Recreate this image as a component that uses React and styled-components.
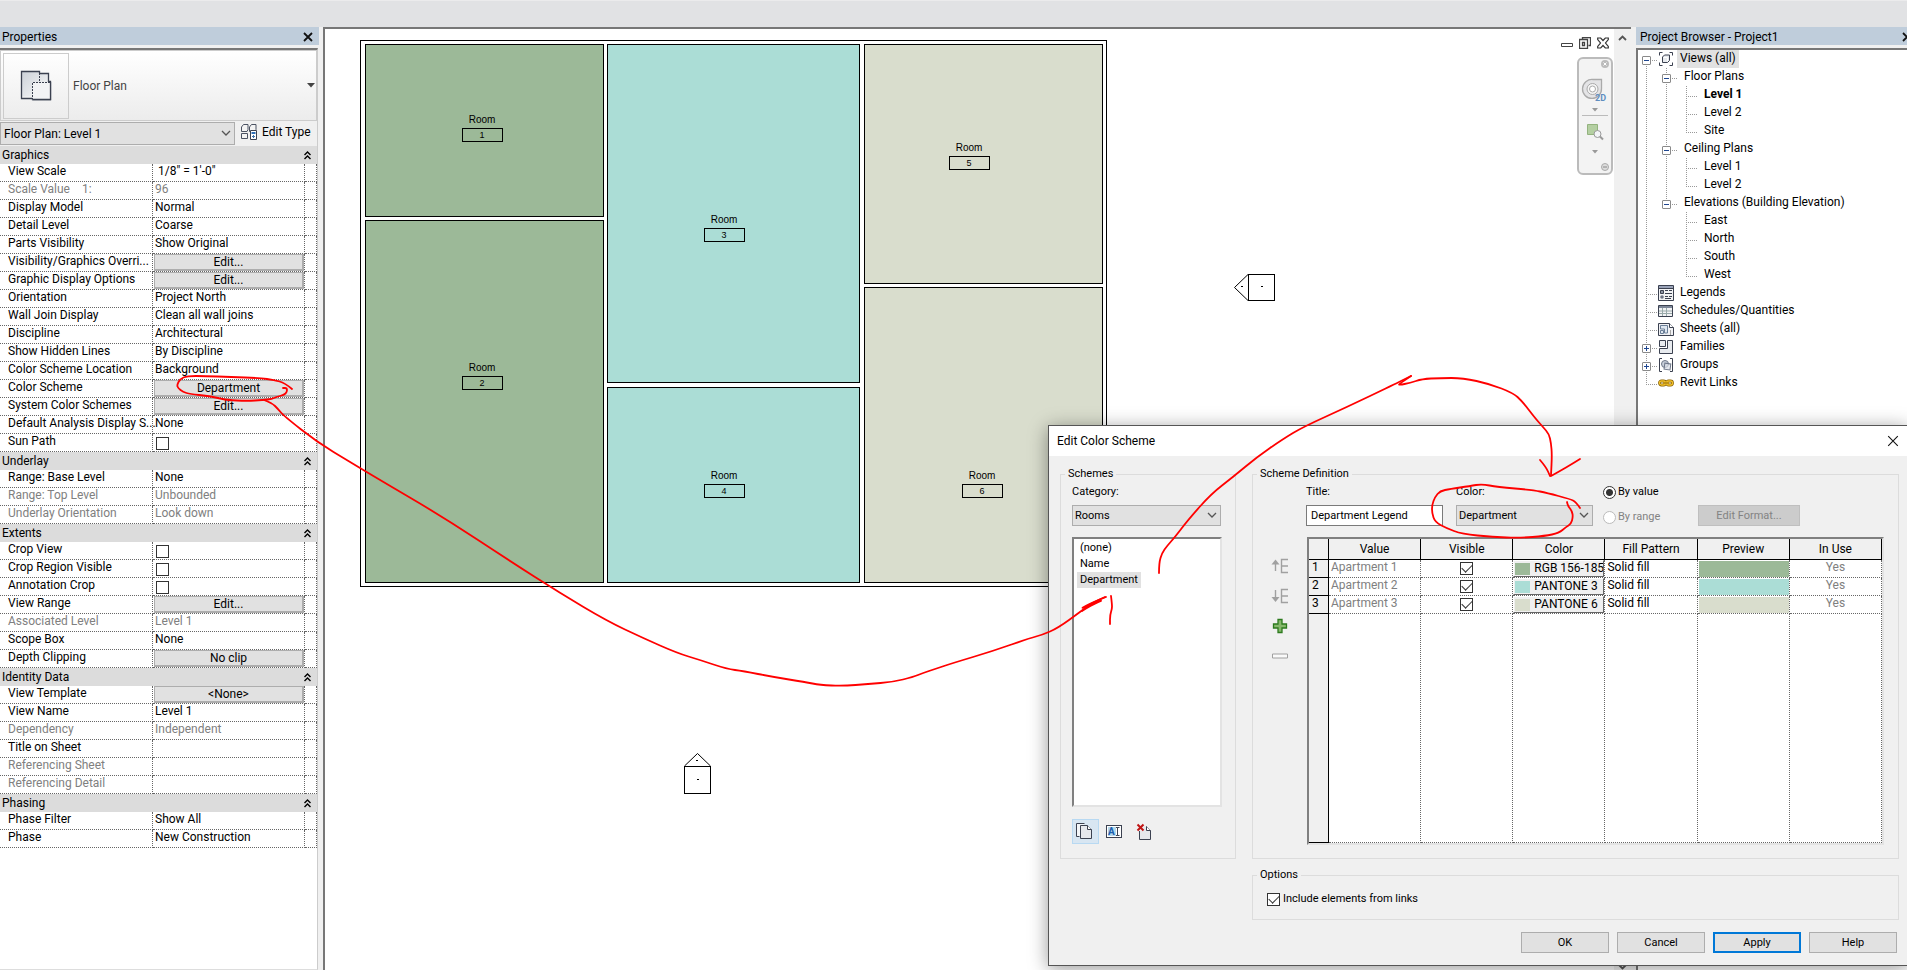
import React from "react";
import styled, { createGlobalStyle, css } from "styled-components";

const GREEN = "#9cb998";
const TEAL = "#abddd6";
const SAND = "#d9ddcd";

const GlobalStyle = createGlobalStyle`
  * {
    box-sizing: border-box;
  }
  body {
    margin: 0;
    overflow: hidden;
    font-family: Roboto, "Liberation Sans", sans-serif;
    font-size: 12px;
    line-height: 16px;
    color: #000;
  }
  button,
  input,
  select {
    font: inherit;
    color: inherit;
    margin: 0;
  }
`;

/* ---------- window frame ---------- */

const Page = styled.div`
  position: relative;
  display: flex;
  flex-direction: column;
  height: 100vh;
  overflow: hidden;
  background: #f0f0f0;
`;

const Ribbon = styled.header`
  flex: 0 0 27px;
  background: #e1e2e4;
  border-top: 1px solid #ebebec;
`;

const Workspace = styled.div`
  flex: 1;
  display: flex;
  min-height: 0;
`;

const DockTitle = styled.h2`
  display: flex;
  align-items: center;
  justify-content: space-between;
  height: 18px;
  margin: 0 0 3px;
  padding: ${(p) => p.$pad};
  background: #bfcddb;
  font-size: 12px;
  font-weight: 400;
  line-height: 18px;
  white-space: nowrap;
`;

const IconButton = styled.button`
  display: inline-flex;
  align-items: center;
  justify-content: center;
  padding: 0;
  border: 0;
  background: none;
`;

/* ---------- properties dock ---------- */

const PropertiesDock = styled.aside`
  flex: 0 0 323px;
  display: flex;
  flex-direction: column;
  padding-right: 4px;
`;

const PropertiesBody = styled.div`
  flex: 1;
  margin-right: 1px;
  border-top: 2px solid #777;
  border-right: 1px solid #ccc;
  border-bottom: 1px solid #ddd;
  background: #fff;
`;

const TypeSelector = styled.div`
  display: flex;
  align-items: center;
  height: 71px;
  padding: 0 1px 0 2px;
  border: 1px solid #ccc;
  background: linear-gradient(#fff, #ececec);
  color: #444;
`;

const TypePreview = styled.div`
  display: flex;
  align-items: center;
  justify-content: center;
  width: 66px;
  height: 66px;
  margin-right: 4px;
  border: 1px solid #ccc;
`;

const TypeName = styled.span`
  flex: 1;
`;

const FilterBar = styled.div`
  display: flex;
  align-items: center;
  gap: 6px;
  height: 25px;
  background: #f0f0f0;
`;

const EditType = styled.button`
  display: flex;
  align-items: center;
  gap: 5px;
  padding: 0 0 3px;
  border: 0;
  background: none;
  white-space: nowrap;
`;

const PropertyTable = styled.table`
  width: 100%;
  table-layout: fixed;
  border-collapse: separate;
  border-spacing: 0;
  white-space: nowrap;

  th,
  td {
    height: 18px;
    padding: 0;
    font-weight: 400;
    text-align: left;
    line-height: 15px;
    vertical-align: top;
  }
`;

const GroupHeading = styled.div`
  display: flex;
  align-items: center;
  justify-content: space-between;
  height: 18px;
  padding: 0 5px 0 2px;
  background: #dcdcdc;
`;

const PropertyRow = styled.tr`
  color: ${(p) => (p.$muted ? "#808080" : "#000")};

  th,
  td {
    border-right: 1px dotted #666;
    border-bottom: 1px dotted #666;
  }
  th {
    padding-left: 8px;
    white-space: pre;
  }
  td {
    padding-left: ${(p) => (p.$control ? 1 : 2)}px;
    white-space: pre;
  }
`;

const PropertyButton = styled.button`
  display: block;
  width: 100%;
  height: 17px;
  padding: 0;
  border: 1px solid #adadad;
  border-right-width: 2px;
  border-bottom-width: 2px;
  background: #e1e1e1;
  line-height: 14px;
`;

const CheckBox = styled.input.attrs({ type: "checkbox" })`
  appearance: none;
  display: grid;
  place-items: center;
  flex: 0 0 13px;
  width: 13px;
  height: 13px;
  border: 1px solid #333;
  background: #fff;

  &:checked::after {
    content: "";
    width: 9px;
    height: 5px;
    margin-bottom: 3px;
    border: solid #333;
    border-width: 0 0 1px 1px;
    transform: rotate(-45deg);
  }
`;

const CheckCell = styled.div`
  padding: 3px 0 0 2px;
`;

/* ---------- drop-down ---------- */

const SelectFrame = styled.div`
  display: grid;
  align-items: center;
  width: ${(p) => p.$width}px;

  select,
  svg {
    grid-area: 1 / 1;
  }
  select {
    appearance: none;
    width: 100%;
    height: ${(p) => p.$height}px;
    padding: 0 24px 0 ${(p) => (p.$height > 21 ? 3 : 2)}px;
    border: 1px solid #adadad;
    border-radius: 0;
    background: #e1e1e1;
  }
  svg {
    justify-self: end;
    margin-right: 4px;
    pointer-events: none;
  }
`;

/* ---------- drawing area ---------- */

const Canvas = styled.main`
  flex: 1;
  display: flex;
  min-width: 0;
  border-top: 2px solid #777;
  border-left: 2px solid #777;
  background: #fff;
`;

const Sheet = styled.div`
  position: relative;
  flex: 1;
  min-width: 0;

  > svg {
    display: block;
    width: 100%;
    height: 100%;
  }
`;

const ViewControls = styled.div`
  position: absolute;
  top: 8px;
  right: 1px;
  display: flex;
  flex-direction: column;
  align-items: flex-end;
  gap: 8px;
`;

const WindowButtons = styled.div`
  display: flex;
  align-items: center;
  gap: 6px;
  height: 12px;
  margin-right: 4px;
`;

const NavBar = styled.div`
  display: flex;
  flex-direction: column;
  align-items: center;
  width: 36px;
  height: 118px;
  border: 2px solid #bbb;
  border-radius: 6px;
  background: #f3f3f3;
`;

const Scrollbar = styled.div`
  display: flex;
  flex-direction: column;
  align-items: center;
  justify-content: space-between;
  width: 17px;
  padding: 6px 0 0;
  background: #f0f0f0;
`;

/* ---------- project browser ---------- */

const BrowserDock = styled.aside`
  flex: 0 0 276px;
  display: flex;
  flex-direction: column;
  margin: 0 -5px 0 5px;
`;

const BrowserBody = styled.div`
  flex: 1;
  border-top: 2px solid #777;
  border-left: 2px solid #777;
  background: #fff;
`;

const Tree = styled.ul`
  margin: 0;
  padding: 0;
  list-style: none;
`;

const TreeRow = styled.li`
  display: flex;
  align-items: center;
  height: 18px;
  white-space: nowrap;
`;

const upright = "repeating-linear-gradient(#999 0 1px, transparent 1px 2px)";
const level = "repeating-linear-gradient(90deg, #999 0 1px, transparent 1px 2px)";

const rails = {
  pipe: css`
    background: ${upright} 8px 0 / 1px 100% no-repeat;
  `,
  tee: css`
    background: ${upright} 8px 0 / 1px 100% no-repeat, ${level} 8px 10px / 12px 1px no-repeat;
  `,
  start: css`
    background: ${upright} 8px 10px / 1px 8px no-repeat, ${level} 8px 10px / 12px 1px no-repeat;
  `,
  end: css`
    background: ${upright} 8px 0 / 1px 10px no-repeat, ${level} 8px 10px / 12px 1px no-repeat;
  `,
};

const Rail = styled.span`
  display: flex;
  align-items: center;
  width: 20px;
  height: 18px;
  padding: 2px 0 0 4px;
  ${(p) => rails[p.$kind]}
`;

const Toggle = styled.button`
  display: flex;
  align-items: center;
  justify-content: center;
  width: 9px;
  height: 9px;
  padding: 0;
  border: 1px solid #8a8a8a;
  border-radius: 1px;
  background: #fff;
`;

const TreeLabel = styled.span`
  margin-left: 3px;
  padding: 0 3px 2px;
  background: ${(p) => (p.$active ? "#e1e1e1" : "none")};
  font-weight: ${(p) => (p.$bold ? 700 : 400)};
`;

/* ---------- dialog ---------- */

const Dialog = styled.section`
  position: absolute;
  top: 425px;
  right: -1px;
  width: 860px;
  border: 1px solid #555;
  background: #f0f0f0;
  box-shadow: 0 3px 18px rgba(0, 0, 0, 0.4);
  font-size: 11px;
`;

const DialogTitle = styled.header`
  display: flex;
  align-items: center;
  justify-content: space-between;
  height: 30px;
  padding: 0 8px;
  background: #fff;

  h1 {
    margin: 0;
    font-size: 12px;
    font-weight: 400;
  }
`;

const DialogBody = styled.div`
  display: grid;
  grid-template-columns: 176px 1fr;
  gap: 8px 16px;
  padding: 10px 8px 12px 11px;
`;

const Group = styled.fieldset`
  min-width: 0;
  margin: 0;
  padding: ${(p) => p.$pad || "0"};
  border: 1px solid #dcdcdc;

  legend {
    margin-left: ${(p) => p.$indent || 4}px;
    padding: 0 3px;
    line-height: 16px;
  }
`;

const Field = styled.div`
  display: flex;
  flex-direction: column;
  gap: 5px;
  padding-top: 2px;
`;

const SchemeList = styled.ul`
  height: 270px;
  margin: 11px 0 12px;
  padding: 1px 3px;
  border: 2px solid;
  border-color: #808080 #e3e3e3 #e3e3e3 #808080;
  background: #fff;
  list-style: none;

  li {
    width: fit-content;
    padding: 0 3px;
    line-height: 16px;
  }
  li[aria-selected="true"] {
    background: #e1e1e1;
  }
`;

const SchemeTools = styled.div`
  display: flex;
  gap: 3px;
`;

const ToolButton = styled.button`
  display: flex;
  align-items: center;
  justify-content: center;
  width: 27px;
  height: 25px;
  padding: 0 3px 0 0;
  border: 1px solid ${(p) => (p.$active ? "#b8d9f2" : "transparent")};
  background: ${(p) => (p.$active ? "#d8e6f2" : "none")};
`;

const DefinitionLayout = styled.div`
  display: grid;
  grid-template-columns: 53px 1fr;
`;

const OrderTools = styled.div`
  display: flex;
  flex-direction: column;
  align-items: center;
  gap: 14px;
  padding-top: 76px;

  button {
    height: 16px;
  }
`;

const DefinitionFields = styled.div`
  display: flex;
  align-items: flex-start;
  gap: 13px;
  margin-bottom: 11px;
`;

const TextInput = styled.input`
  width: 137px;
  height: 21px;
  padding: 0 4px;
  border: 1px solid #7a7a7a;
  background: #fff;
`;

const RadioColumn = styled.div`
  display: flex;
  flex-direction: column;
  gap: 9px;
  width: 82px;
  margin: 2px 0 0 -3px;
`;

const RadioLabel = styled.label`
  display: flex;
  align-items: center;
  gap: 2px;
  color: ${(p) => (p.$muted ? "#838383" : "#000")};
`;

const Radio = styled.input.attrs({ type: "radio" })`
  appearance: none;
  width: 13px;
  height: 13px;
  border: 1px solid #333;
  border-radius: 50%;
  background: #fff;

  &:checked {
    background: radial-gradient(#333 0 3px, #fff 4px);
  }
  &:disabled {
    border-color: #bbb;
  }
`;

const PushButton = styled.button`
  width: ${(p) => p.$width || 88}px;
  height: 21px;
  padding: 0;
  border: ${(p) => (p.$primary ? "2px solid #0078d7" : "1px solid #adadad")};
  background: #e1e1e1;

  &:disabled {
    border-color: #bfbfbf;
    background: #ccc;
    color: #838383;
  }
`;

const GridFrame = styled.div`
  margin: 0 14px 0 1px;
  border: 2px solid;
  border-color: #808080 #e3e3e3 #e3e3e3 #808080;
  background: #fff;
`;

const SchemeGrid = styled.table`
  width: 100%;
  table-layout: fixed;
  border-collapse: separate;
  border-spacing: 0;
  font-size: 12px;
  white-space: nowrap;

  th,
  td {
    height: 18px;
    padding: 0;
    font-weight: 400;
    line-height: 15px;
    vertical-align: top;
    overflow: hidden;
  }
  thead th {
    height: 21px;
    border-right: 1px solid #000;
    border-bottom: 1px solid #000;
    background: #f0f0f0;
    line-height: 20px;
    text-align: center;
  }
  tbody th {
    padding-left: 3px;
    border-right: 1px solid #000;
    border-bottom: 1px solid #000;
    background: #f0f0f0;
    text-align: left;
  }
  td {
    border-right: 1px dotted #666;
    border-bottom: 1px dotted #666;
  }
`;

const FillerRow = styled.tr`
  th,
  td {
    height: 229px;
  }
`;

const TextCell = styled.td`
  color: ${(p) => (p.$muted ? "#808080" : "#000")};
  text-align: ${(p) => (p.$centered ? "center" : "left")};

  && {
    padding-left: ${(p) => (p.$centered ? 0 : 2)}px;
  }
`;

const CenteredBox = styled.div`
  display: flex;
  justify-content: center;
  padding-top: 2px;
`;

const ColorButton = styled.button`
  display: flex;
  align-items: center;
  gap: 4px;
  width: 100%;
  height: 17px;
  padding: 0 0 0 1px;
  border: 1px solid;
  border-color: #fff #666 #666 #fff;
  background: #f0f0f0;
  line-height: 15px;
  overflow: hidden;
`;

const Swatch = styled.span`
  flex: 0 0 15px;
  height: 12px;
  background: ${(p) => p.$color};
`;

const PreviewFill = styled.div`
  height: 16px;
  margin: 1px 0 0 1px;
  background: ${(p) => p.$color};
`;

const OptionLabel = styled.label`
  display: flex;
  align-items: center;
  gap: 3px;
`;

const DialogButtons = styled.footer`
  display: flex;
  justify-content: flex-end;
  gap: 8px;
  padding: 0 10px 12px;
`;

/* ---------- markup over the window ---------- */

const Markup = styled.svg`
  position: absolute;
  inset: 0;
  width: 100%;
  height: 100%;
  pointer-events: none;
`;

const propertyGroups = [
  {
    name: "Graphics",
    rows: [
      { label: "View Scale", value: " 1/8\" = 1'-0\"" },
      { label: "Scale Value    1:", value: "96", muted: true },
      { label: "Display Model", value: "Normal" },
      { label: "Detail Level", value: "Coarse" },
      { label: "Parts Visibility", value: "Show Original" },
      { label: "Visibility/Graphics Overri...", button: "Edit..." },
      { label: "Graphic Display Options", button: "Edit..." },
      { label: "Orientation", value: "Project North" },
      { label: "Wall Join Display", value: "Clean all wall joins" },
      { label: "Discipline", value: "Architectural" },
      { label: "Show Hidden Lines", value: "By Discipline" },
      { label: "Color Scheme Location", value: "Background" },
      { label: "Color Scheme", button: "Department" },
      { label: "System Color Schemes", button: "Edit..." },
      { label: "Default Analysis Display S...", value: "None" },
      { label: "Sun Path", check: true },
    ],
  },
  {
    name: "Underlay",
    rows: [
      { label: "Range: Base Level", value: "None" },
      { label: "Range: Top Level", value: "Unbounded", muted: true },
      { label: "Underlay Orientation", value: "Look down", muted: true },
    ],
  },
  {
    name: "Extents",
    rows: [
      { label: "Crop View", check: true },
      { label: "Crop Region Visible", check: true },
      { label: "Annotation Crop", check: true },
      { label: "View Range", button: "Edit..." },
      { label: "Associated Level", value: "Level 1", muted: true },
      { label: "Scope Box", value: "None" },
      { label: "Depth Clipping", button: "No clip" },
    ],
  },
  {
    name: "Identity Data",
    rows: [
      { label: "View Template", button: "<None>" },
      { label: "View Name", value: "Level 1" },
      { label: "Dependency", value: "Independent", muted: true },
      { label: "Title on Sheet", value: "" },
      { label: "Referencing Sheet", value: "", muted: true },
      { label: "Referencing Detail", value: "", muted: true },
    ],
  },
  {
    name: "Phasing",
    rows: [
      { label: "Phase Filter", value: "Show All" },
      { label: "Phase", value: "New Construction" },
    ],
  },
];

const treeRows = [
  { label: "Views (all)", rails: ["start"], toggle: "-", icon: "views", active: true },
  { label: "Floor Plans", rails: ["pipe", "tee"], toggle: "-" },
  { label: "Level 1", rails: ["pipe", "pipe", "tee"], bold: true },
  { label: "Level 2", rails: ["pipe", "pipe", "tee"] },
  { label: "Site", rails: ["pipe", "pipe", "end"] },
  { label: "Ceiling Plans", rails: ["pipe", "tee"], toggle: "-" },
  { label: "Level 1", rails: ["pipe", "pipe", "tee"] },
  { label: "Level 2", rails: ["pipe", "pipe", "end"] },
  { label: "Elevations (Building Elevation)", rails: ["pipe", "end"], toggle: "-" },
  { label: "East", rails: ["pipe", "none", "tee"] },
  { label: "North", rails: ["pipe", "none", "tee"] },
  { label: "South", rails: ["pipe", "none", "tee"] },
  { label: "West", rails: ["pipe", "none", "end"] },
  { label: "Legends", rails: ["tee"], icon: "legends" },
  { label: "Schedules/Quantities", rails: ["tee"], icon: "schedules" },
  { label: "Sheets (all)", rails: ["tee"], icon: "sheets" },
  { label: "Families", rails: ["tee"], toggle: "+", icon: "families" },
  { label: "Groups", rails: ["tee"], toggle: "+", icon: "groups" },
  { label: "Revit Links", rails: ["end"], icon: "links" },
];

const schemeRows = [
  { value: "Apartment 1", name: "RGB 156-185", color: GREEN },
  { value: "Apartment 2", name: "PANTONE 3", color: TEAL },
  { value: "Apartment 3", name: "PANTONE 6", color: SAND },
];

const rooms = [
  { n: 1, x: 365, y: 44, w: 238, h: 172, color: GREEN, tx: 462, ty: 128 },
  { n: 2, x: 365, y: 220, w: 238, h: 362, color: GREEN, tx: 462, ty: 376 },
  { n: 3, x: 607, y: 44, w: 252, h: 338, color: TEAL, tx: 704, ty: 228 },
  { n: 4, x: 607, y: 387, w: 252, h: 195, color: TEAL, tx: 704, ty: 484 },
  { n: 5, x: 864, y: 44, w: 238, h: 239, color: SAND, tx: 949, ty: 156 },
  { n: 6, x: 864, y: 287, w: 238, h: 295, color: SAND, tx: 962, ty: 484 },
];

const strokes = [
  [[292, 389], [285, 383], [274, 380], [260, 378], [230, 377], [205, 376], [187, 376], [180, 379], [177, 385], [178, 388], [183, 392], [190, 394], [208, 396], [218, 398], [227, 400], [247, 401], [263, 400], [272, 399], [276, 397], [284, 395], [287, 392], [287, 388], [283, 388]],
  [[264, 400], [272, 403], [278, 409], [284, 416], [317, 442], [350, 462], [380, 480], [443, 517], [510, 561], [560, 593], [607, 621], [643, 638], [677, 653], [700, 660], [727, 669], [743, 671], [773, 677], [805, 682], [820, 685], [843, 686], [868, 684], [893, 682], [913, 677], [923, 673], [935, 669], [953, 663], [993, 651], [1030, 638], [1042, 635], [1058, 628], [1080, 612], [1092, 603], [1105, 597]],
  [[1106, 597], [1093, 602], [1080, 609], [1088, 606], [1105, 599], [1090, 606], [1082, 611]],
  [[1111, 596], [1112, 604], [1112, 609], [1110, 615], [1110, 624]],
  [[1159, 573], [1159, 563], [1162, 553], [1167, 546], [1175, 537], [1188, 520], [1211, 494], [1233, 477], [1257, 457], [1283, 439], [1303, 427], [1347, 407], [1393, 385], [1411, 376]],
  [[1411, 376], [1399, 384], [1399, 385], [1410, 383], [1422, 379], [1440, 378], [1463, 378], [1490, 384], [1513, 393], [1522, 401], [1535, 418], [1543, 427], [1549, 434], [1551, 443], [1552, 455], [1551, 475]],
  [[1540, 460], [1546, 467], [1550, 476]],
  [[1580, 459], [1572, 464], [1560, 471], [1551, 476]],
  [[1580, 508], [1576, 502], [1570, 499], [1547, 493], [1533, 490], [1497, 487], [1482, 484], [1470, 486], [1450, 489], [1440, 491], [1435, 497], [1432, 505], [1432, 513], [1435, 522], [1446, 528], [1462, 534], [1493, 537], [1520, 538], [1545, 536], [1559, 533], [1566, 527], [1571, 524], [1573, 517], [1572, 511], [1568, 506], [1567, 502]],
];

// runs a quadratic curve through the midpoints so the pen line stays soft
function penPath(points) {
  let d = `M${points[0].join(" ")}`;
  for (let i = 1; i < points.length - 1; i++) {
    const [x, y] = points[i];
    const [nx, ny] = points[i + 1];
    d += ` Q${x} ${y} ${(x + nx) / 2} ${(y + ny) / 2}`;
  }
  return `${d} L${points[points.length - 1].join(" ")}`;
}

const CrossIcon = ({ size, width }) => (
  <svg width={size} height={size} viewBox="0 0 10 10" aria-hidden="true">
    <path d="M1 1L9 9M9 1L1 9" stroke="#111" strokeWidth={width} />
  </svg>
);

const Chevron = () => (
  <svg width="10" height="7" aria-hidden="true">
    <path d="M1 1L5 5L9 1" fill="none" stroke="#555" strokeWidth="1.3" />
  </svg>
);

const CollapseIcon = () => (
  <svg width="9" height="9" aria-hidden="true">
    <path d="M1.5 4L4.5 1L7.5 4M1.5 8L4.5 5L7.5 8" fill="none" stroke="#000" strokeWidth="1.4" />
  </svg>
);

const treeIcons = {
  views: (
    <>
      <path d="M4.5 1.5h-3v3M11.5 1.5h3v3M4.5 14.5h-3v-3M11.5 14.5h3v-3" fill="none" stroke="#3b4150" />
      <path d="M4.5 6l2-2h5v5.5l-2 2h-5z" fill="#e8ebef" stroke="#3b4150" />
      <path d="M5.5 6.5h4v4" fill="none" stroke="#fff" />
    </>
  ),
  legends: (
    <>
      <path d="M.5 .5h15v15H.5z" fill="#f2f3f5" stroke="#3b4150" />
      <path d="M1 1h14v2H1z" fill="#9aa3b8" />
      <path d="M1 3.5h14" stroke="#3b4150" />
      <path d="M2.5 5.5h3v3h-3z" fill="#8b93a3" stroke="#3b4150" />
      <circle cx="4" cy="12" r="1.8" fill="#6d7484" />
      <path d="M7 5.5h3M11 5.5h3M7 8.5h7M7 11.5h3M11 11.5h3M7 13.5h6" stroke="#3b4150" />
    </>
  ),
  schedules: (
    <>
      <path d="M.5 2.5h14v11H.5z" fill="#f2f3f5" stroke="#3b4150" />
      <path d="M1 3h13v2H1z" fill="#7d8798" />
      <path d="M1 8h13M1 10.500h13M4.500 5v8M8.500 5v8" stroke="#9aa" />
    </>
  ),
  sheets: (
    <>
      <path d="M.5 2.5h11l4 4v8H.5z" fill="#f0f1f4" stroke="#3b4150" />
      <path d="M11.5 2.5v4h4" fill="#fff" stroke="#3b4150" />
      <path d="M2.5 8V4.5h7v7.5h-3V8h-4zM2.5 9.5h3v3h-3z" fill="#dfe7f0" stroke="#6a7f98" />
      <path d="M12.5 9v5" stroke="#aaa" />
    </>
  ),
  families: (
    <>
      <path d="M1.5 1.5h6v6h-6z" fill="#e8ebef" stroke="#3b4150" />
      <path d="M9.5 1.5h5v13h-13v-5h8z" fill="#e8ebef" stroke="#3b4150" />
    </>
  ),
  groups: (
    <>
      <path d="M4 1.5H1.5v13H4M12 1.5h2.5v13H12" fill="none" stroke="#3b4150" />
      <circle cx="7" cy="7" r="3.5" fill="#c9d0da" stroke="#6d7688" />
      <path d="M6.5 6.5h6v6h-6z" fill="#dbe0e8" fillOpacity=".7" stroke="#6d7688" transform="rotate(8 9 9)" />
    </>
  ),
  links: (
    <>
      <g fill="none" stroke="#8a6200" strokeWidth="2.8">
        <rect x="1.5" y="6" width="6" height="4" rx="2" />
        <rect x="8.5" y="6" width="6" height="4" rx="2" />
      </g>
      <g fill="none" stroke="#f3c22b" strokeWidth="1.3">
        <rect x="1.5" y="6" width="6" height="4" rx="2" />
        <rect x="8.5" y="6" width="6" height="4" rx="2" />
      </g>
      <path d="M5 8h6" stroke="#8a6200" strokeWidth="2" />
      <path d="M5 8h6" stroke="#f3c22b" />
    </>
  ),
};

function PropertyValue({ row }) {
  if (row.button) return <PropertyButton aria-label={`${row.label} ${row.button}`}>{row.button}</PropertyButton>;
  if (row.check) {
    return (
      <CheckCell>
        <CheckBox aria-label={row.label} />
      </CheckCell>
    );
  }
  return row.value;
}

function Properties() {
  return (
    <PropertiesDock>
      <DockTitle $pad="1px 6px 0 2px">
        Properties
        <IconButton aria-label="Close properties">
          <CrossIcon size={10} width={1.8} />
        </IconButton>
      </DockTitle>
      <PropertiesBody>
        <TypeSelector>
          <TypePreview>
            <svg width="34" height="34" aria-hidden="true">
              <defs>
                <linearGradient id="slab" x1="0" y1="0" x2="1" y2="1">
                  <stop offset="0" stopColor="#ccd1d8" />
                  <stop offset="1" stopColor="#fafafa" />
                </linearGradient>
              </defs>
              <path d="M2.5 2.5h18v2h9v24h-17v-1h-10z" fill="url(#slab)" />
              <path d="M20.5 4.5V2.5h-18v27h11v1h18v-18h-2v-8h-9" fill="none" stroke="#3b4150" strokeWidth="1.3" />
              <path d="M13.5 13.5h18v17h-18z" fill="#f2f3f5" />
              <path d="M20.5 4v9.5M31 13.5H13.5V30" fill="none" stroke="#3b4150" strokeDasharray="2 1" />
              <path d="M31.5 13v17.5h-18" fill="none" stroke="#3b4150" strokeWidth="1.3" />
            </svg>
          </TypePreview>
          <TypeName>Floor Plan</TypeName>
          <IconButton aria-label="Change type">
            <svg width="8" height="5" aria-hidden="true">
              <path d="M0 0h8L4 4.5z" fill="#444" />
            </svg>
          </IconButton>
        </TypeSelector>
        <FilterBar>
          <SelectFrame $width={235} $height={23}>
            <select aria-label="Properties filter">
              <option>Floor Plan: Level 1</option>
            </select>
            <Chevron />
          </SelectFrame>
          <EditType>
            <svg width="16" height="16" aria-hidden="true">
              <path
                d="M.5 3l2-2.500h4.500v5l-1 2H.5zM8.500 3l2-2.500h4.500v5l-1 2H8.500zM.5 9.500h6v5h-6z"
                fill="#f3f3f3"
                stroke="#4b5262"
              />
              <path d="M9.5 6.5h6v9h-6z" fill="#fff" stroke="#3b4150" />
              <path d="M10.500 8h4v2h-4z" fill="#2f6fb5" />
              <path d="M11 12.500h3M12.500 11v3" stroke="#3b6ea8" />
            </svg>
            Edit Type
          </EditType>
        </FilterBar>
        <PropertyTable aria-label="Properties">
          <colgroup>
            <col width="153" />
            <col />
            <col width="12" />
          </colgroup>
          {propertyGroups.map((group) => (
            <tbody key={group.name}>
              <tr>
                <th colSpan={3} scope="rowgroup">
                  <GroupHeading>
                    {group.name}
                    <IconButton aria-label={`Collapse ${group.name}`}>
                      <CollapseIcon />
                    </IconButton>
                  </GroupHeading>
                </th>
              </tr>
              {group.rows.map((row) => (
                <PropertyRow key={row.label} $muted={row.muted} $control={row.button || row.check}>
                  <th scope="row">{row.label}</th>
                  <td>
                    <PropertyValue row={row} />
                  </td>
                  <td />
                </PropertyRow>
              ))}
            </tbody>
          ))}
        </PropertyTable>
      </PropertiesBody>
    </PropertiesDock>
  );
}

function FloorPlan() {
  return (
    <svg role="img" aria-label="Floor plan">
      <g transform="translate(-325 -29)" fill="none" stroke="#000" shapeRendering="crispEdges">
        <rect x="360.5" y="40.5" width="746" height="546" />
        {rooms.map((room) => (
          <g key={room.n}>
            <rect x={room.x + 0.5} y={room.y + 0.5} width={room.w} height={room.h} fill={room.color} />
            <rect x={room.tx + 0.5} y={room.ty + 0.5} width="40" height="13" />
            <g fill="#000" stroke="none" textAnchor="middle" fontFamily="Liberation Sans, sans-serif">
              <text x={room.tx + 20} y={room.ty - 5} fontSize="10">Room</text>
              <text x={room.tx + 20} y={room.ty + 10} fontSize="9">{room.n}</text>
            </g>
          </g>
        ))}
        <rect x="1248.5" y="274.5" width="26" height="26" />
        <path d="M1261 286.5h2M1241 286.5h2M697 779.5h2M696 760.5h2" />
        <rect x="684.5" y="766.5" width="26" height="27" />
        <path
          d="M1248 274.5L1234.5 287.5L1248 300.5M684.5 766L697.5 753.5L710.5 766"
          shapeRendering="auto"
        />
      </g>
    </svg>
  );
}

function DrawingArea() {
  return (
    <Canvas>
      <Sheet>
        <FloorPlan />
        <ViewControls>
          <WindowButtons>
            <IconButton aria-label="Minimize view">
              <svg width="12" height="12" aria-hidden="true">
                <path d="M.5 6.5h11v3H.5z" fill="#fff" stroke="#444" />
              </svg>
            </IconButton>
            <IconButton aria-label="Restore view">
              <svg width="12" height="12" aria-hidden="true">
                <path d="M3.5 2.5v-2h8v8h-2M.5 2.5h8v9h-8zM3.5 5.5h2v3h-2z" fill="#fff" stroke="#444" strokeWidth="1.3" />
              </svg>
            </IconButton>
            <IconButton aria-label="Close view">
              <svg width="12" height="12" aria-hidden="true">
                <path
                  d="M.7 1h3L6 3.5L8.300 1h3v1.500L8.500 6l2.800 3.500V11h-3L6 8.500L3.700 11h-3V9.500L3.500 6L.7 2.500z"
                  fill="#fff"
                  stroke="#333"
                  strokeWidth="1.2"
                />
              </svg>
            </IconButton>
          </WindowButtons>
          <NavBar>
            <svg width="32" height="114" aria-hidden="true">
              <circle cx="26" cy="5" r="4" fill="#bbb" />
              <path d="M24.5 3.5l3 3M27.5 3.5l-3 3" stroke="#fff" />
              <path d="M14 20.500h8.500v9A9.500 9.500 0 1 1 14 20.500z" fill="#e4e4e6" stroke="#aaa" strokeWidth="1.3" />
              <circle cx="13.5" cy="30" r="5.5" fill="#f5f5f5" stroke="#aaa" />
              <circle cx="13.5" cy="30" r="3" fill="#fff" stroke="#aaa" />
              <text x="16" y="42" fill="#5f8dbf" fontSize="9" fontWeight="700" fontFamily="Roboto, sans-serif">2D</text>
              <path d="M13 49h6l-3 3.500z" fill="#999" />
              <path d="M3 56.500h26" stroke="#bbb" />
              <path d="M8.500 65.500h10v10h-10z" fill="#b4cfa2" stroke="#93b37e" />
              <circle cx="18.5" cy="75" r="3.5" fill="#f3f5f8" stroke="#999" />
              <path d="M21 77.500l3 3" stroke="#999" strokeWidth="2" />
              <path d="M13 91h6l-3 3.500z" fill="#999" />
              <circle cx="26" cy="108" r="3.5" fill="#ddd" stroke="#aaa" />
              <path d="M24 108h4" stroke="#888" />
            </svg>
          </NavBar>
        </ViewControls>
      </Sheet>
      <Scrollbar>
        <svg width="9" height="6" aria-hidden="true">
          <path d="M1 5L4.5 1.5L8 5" fill="none" stroke="#555" strokeWidth="1.8" />
        </svg>
        <svg width="9" height="6" aria-hidden="true">
          <path d="M1 1L4.5 4.5L8 1" fill="none" stroke="#555" strokeWidth="1.8" />
        </svg>
      </Scrollbar>
    </Canvas>
  );
}

function ProjectBrowser() {
  return (
    <BrowserDock>
      <DockTitle $pad="1px 0 0 4px">
        Project Browser - Project1
        <IconButton aria-label="Close browser">
          <CrossIcon size={10} width={1.8} />
        </IconButton>
      </DockTitle>
      <BrowserBody>
        <Tree>
          {treeRows.map((row, i) => (
            <TreeRow key={i}>
              {row.rails.map((kind, depth) => (
                <Rail key={depth} $kind={kind}>
                  {row.toggle && depth === row.rails.length - 1 && (
                    <Toggle aria-label={`Toggle ${row.label}`}>
                      <svg width="7" height="7" aria-hidden="true">
                        <path d={row.toggle === "+" ? "M1 3.5h5M3.5 1v5" : "M1 3.5h5"} stroke="#1f4690" />
                      </svg>
                    </Toggle>
                  )}
                </Rail>
              ))}
              {row.icon && (
                <svg width="16" height="16" aria-hidden="true">
                  {treeIcons[row.icon]}
                </svg>
              )}
              <TreeLabel $active={row.active} $bold={row.bold}>
                {row.label}
              </TreeLabel>
            </TreeRow>
          ))}
        </Tree>
      </BrowserBody>
    </BrowserDock>
  );
}

function SchemesGroup() {
  return (
    <Group $pad="0 13px 14px 11px" $indent={-7}>
      <legend>Schemes</legend>
      <Field>
        <label htmlFor="category">Category:</label>
        <SelectFrame $width={149} $height={21}>
          <select id="category">
            <option>Rooms</option>
          </select>
          <Chevron />
        </SelectFrame>
      </Field>
      <SchemeList role="listbox" aria-label="Schemes">
        <li role="option" aria-selected="false">(none)</li>
        <li role="option" aria-selected="false">Name</li>
        <li role="option" aria-selected="true">Department</li>
      </SchemeList>
      <SchemeTools>
        <ToolButton $active aria-label="Duplicate">
          <svg width="18" height="18" aria-hidden="true">
            <path d="M9.5 .5h-8v13h3" fill="#f4f6f8" stroke="#3b4150" />
            <path d="M5.5 2.5h7l4 4v9h-11z" fill="#e6e8ec" stroke="#3b4150" />
            <path d="M12.5 2.5v4h4" fill="#fff" stroke="#3b4150" />
          </svg>
        </ToolButton>
        <ToolButton aria-label="Rename">
          <svg width="18" height="18" aria-hidden="true">
            <rect x="1.5" y="2.5" width="15" height="12" fill="#fff" stroke="#3b4150" />
            <path d="M3 4h8v9H3z" fill="#b5d8ec" />
            <text x="3" y="12" fill="#1c5fae" fontSize="10" fontWeight="700" fontFamily="Roboto, sans-serif">A</text>
            <path d="M11 4.5h1.500v8H11M14.500 4.5H12.500v8h2" fill="none" stroke="#3b4150" />
          </svg>
        </ToolButton>
        <ToolButton aria-label="Delete">
          <svg width="18" height="18" aria-hidden="true">
            <path d="M4.5 8v8.5h11v-9l-4-4h-3v4z" fill="#e6e8ec" />
            <path d="M4.5 8v8.5h11v-9l-4-4" fill="none" stroke="#3b4150" />
            <path d="M11.5 3.5v4h4" fill="#fff" stroke="#3b4150" />
            <path d="M2.5 1.5l6 6M8.5 1.5l-6 6" stroke="#c01515" strokeWidth="2" />
          </svg>
        </ToolButton>
      </SchemeTools>
    </Group>
  );
}

function DefinitionGroup() {
  return (
    <Group>
      <legend>Scheme Definition</legend>
      <DefinitionLayout>
        <OrderTools>
          <IconButton aria-label="Move up">
            <svg width="18" height="16" aria-hidden="true">
              <path d="M4.5 13V4M17 1.5H10.5v13H17M10.500 8H17" fill="none" stroke="#a0a0a0" strokeWidth="1.4" />
              <path d="M4.5 1.5l4 5h-8z" fill="#a0a0a0" />
            </svg>
          </IconButton>
          <IconButton aria-label="Move down">
            <svg width="18" height="16" aria-hidden="true">
              <path d="M4.5 2v10M17 1.5H10.5v13H17M10.500 8H17" fill="none" stroke="#a0a0a0" strokeWidth="1.4" />
              <path d="M4.5 14l4-5h-8z" fill="#a0a0a0" />
            </svg>
          </IconButton>
          <IconButton aria-label="Add value">
            <svg width="16" height="16" aria-hidden="true">
              <path
                d="M6 1.5h4v4.500h4.500v4H10v4.500H6V10H1.500V6H6z"
                fill="#86b86c"
                stroke="#2c7a1d"
                strokeWidth="1.3"
              />
            </svg>
          </IconButton>
          <IconButton aria-label="Remove value">
            <svg width="18" height="8" aria-hidden="true">
              <path d="M1.5 2h15v4h-15z" fill="#fafafa" stroke="#a0a0a0" />
            </svg>
          </IconButton>
        </OrderTools>
        <div>
          <DefinitionFields>
            <Field>
              <label htmlFor="title">Title:</label>
              <TextInput id="title" defaultValue="Department Legend" />
            </Field>
            <Field>
              <label htmlFor="color">Color:</label>
              <SelectFrame $width={137} $height={21}>
                <select id="color">
                  <option>Department</option>
                </select>
                <Chevron />
              </SelectFrame>
            </Field>
            <RadioColumn>
              <RadioLabel>
                <Radio name="by" defaultChecked />
                By value
              </RadioLabel>
              <RadioLabel $muted>
                <Radio name="by" disabled />
                By range
              </RadioLabel>
            </RadioColumn>
            <Field>
              <span>&nbsp;</span>
              <PushButton $width={102} disabled>
                Edit Format...
              </PushButton>
            </Field>
          </DefinitionFields>
          <GridFrame>
            <SchemeGrid>
              <colgroup>
                <col width="20" />
                <col span={6} />
              </colgroup>
              <thead>
                <tr>
                  <th aria-label="Row" />
                  <th scope="col">Value</th>
                  <th scope="col">Visible</th>
                  <th scope="col">Color</th>
                  <th scope="col">Fill Pattern</th>
                  <th scope="col">Preview</th>
                  <th scope="col">In Use</th>
                </tr>
              </thead>
              <tbody>
                {schemeRows.map((row, i) => (
                  <tr key={row.value}>
                    <th scope="row">{i + 1}</th>
                    <TextCell $muted>{row.value}</TextCell>
                    <td>
                      <CenteredBox>
                        <CheckBox defaultChecked aria-label={`${row.value} visible`} />
                      </CenteredBox>
                    </td>
                    <td>
                      <ColorButton>
                        <Swatch $color={row.color} />
                        {row.name}
                      </ColorButton>
                    </td>
                    <TextCell>Solid fill</TextCell>
                    <td>
                      <PreviewFill $color={row.color} />
                    </td>
                    <TextCell $muted $centered>
                      Yes
                    </TextCell>
                  </tr>
                ))}
                <FillerRow>
                  <th />
                  <td />
                  <td />
                  <td />
                  <td />
                  <td />
                  <td />
                </FillerRow>
              </tbody>
            </SchemeGrid>
          </GridFrame>
        </div>
      </DefinitionLayout>
    </Group>
  );
}

function ColorSchemeDialog() {
  return (
    <Dialog role="dialog" aria-labelledby="dialog-title">
      <DialogTitle>
        <h1 id="dialog-title">Edit Color Scheme</h1>
        <IconButton aria-label="Close dialog">
          <CrossIcon size={12} width={0.9} />
        </IconButton>
      </DialogTitle>
      <DialogBody>
        <SchemesGroup />
        <DefinitionGroup />
        <span />
        <Group $pad="8px 13px 12px 14px" $indent={-10}>
          <legend>Options</legend>
          <OptionLabel>
            <CheckBox defaultChecked />
            Include elements from links
          </OptionLabel>
        </Group>
      </DialogBody>
      <DialogButtons>
        <PushButton>OK</PushButton>
        <PushButton>Cancel</PushButton>
        <PushButton $primary>Apply</PushButton>
        <PushButton>Help</PushButton>
      </DialogButtons>
    </Dialog>
  );
}

function App() {
  return (
    <>
      <GlobalStyle />
      <Page>
        <Ribbon />
        <Workspace>
          <Properties />
          <DrawingArea />
          <ProjectBrowser />
        </Workspace>
        <ColorSchemeDialog />
        <Markup aria-hidden="true">
          {strokes.map((points, i) => (
            <path
              key={i}
              d={penPath(points)}
              fill="none"
              stroke="#f00"
              strokeWidth="1.8"
              strokeLinecap="round"
              strokeLinejoin="round"
            />
          ))}
        </Markup>
      </Page>
    </>
  );
}

export default App;
